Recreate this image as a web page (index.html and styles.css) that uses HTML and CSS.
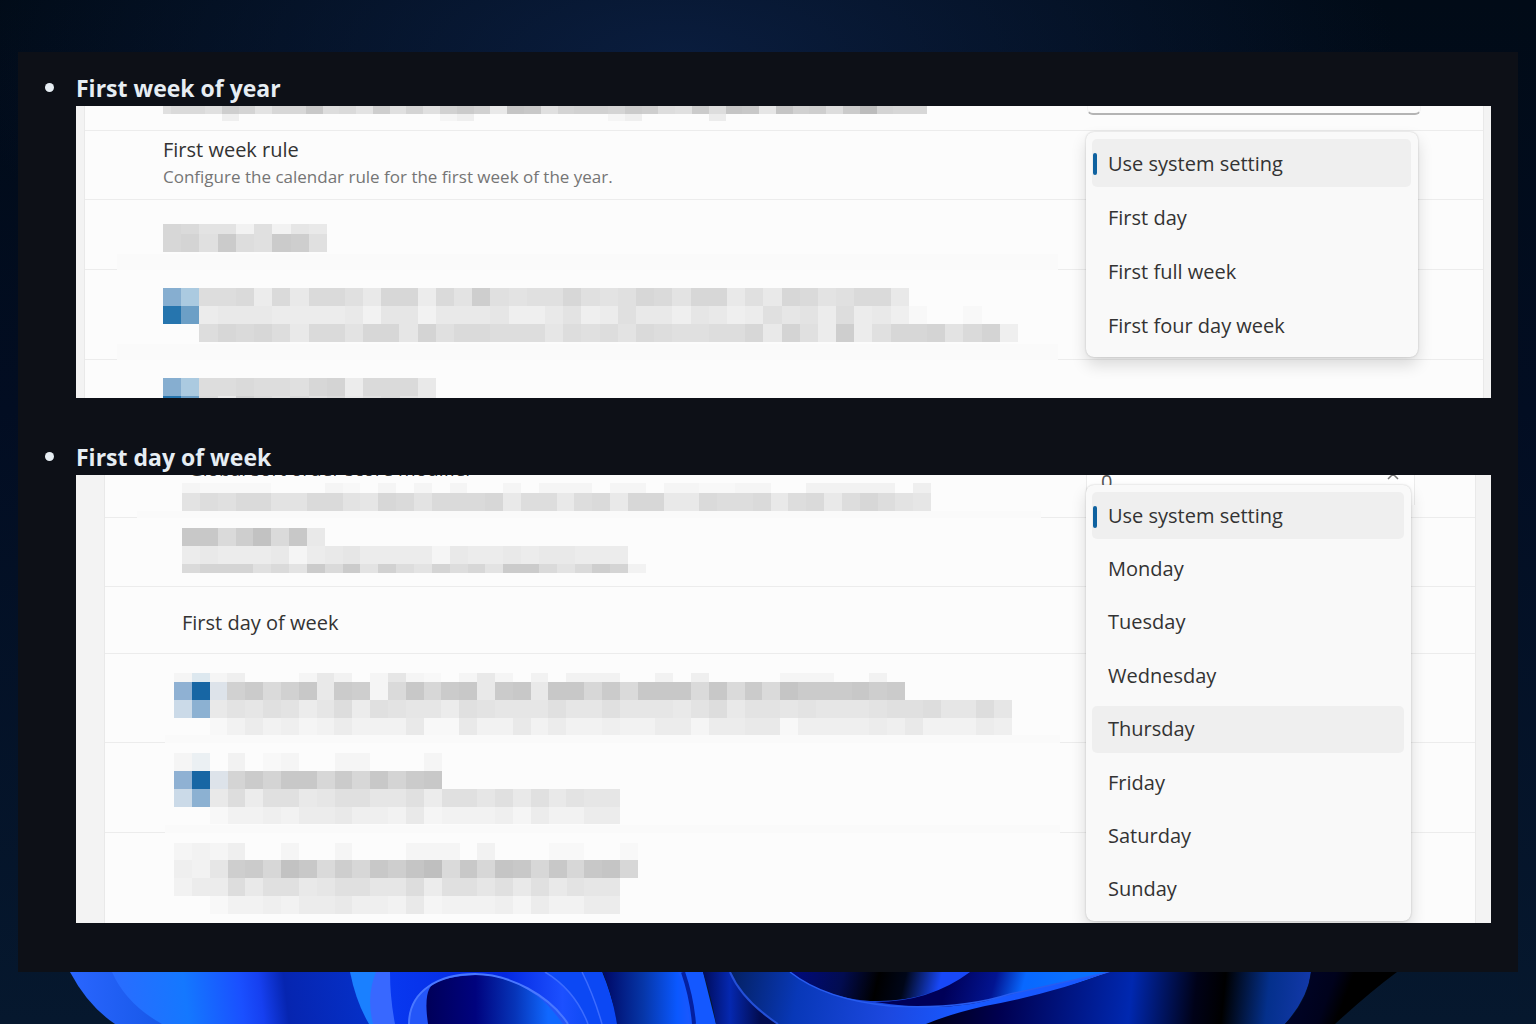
FILE: index.html
```html
<!DOCTYPE html>
<html lang="en">
<head>
<meta charset="utf-8">
<title>Calendar settings</title>
<link rel="stylesheet" href="styles.css">
</head>
<body>
<main class="notes">
  <ul class="notes-list">
    <li class="note">
      <h2 class="note-title">First week of year</h2>
      <section class="shot shot-year" aria-label="First week of year">
        <div class="card">
          <div class="row row-cut">
            <svg class="mosaic" data-cell="16.8" data-lead="0.5" data-rows="8:jlljpnimmrklipjnjoqogsrjnoonqpkjqksrhsopkqvnmm 7:....e............ce........ce....f............"></svg>
            <div class="field-edge"></div>
          </div>
          <div class="row row-rule">
            <h3 class="setting">First week rule</h3>
            <p class="hint">Configure the calendar rule for the first week of the year.</p>
          </div>
          <div class="row row-short smudged">
            <svg class="mosaic" data-cell="18.2" data-rows="10:mliidjdhg 18:mnjqkjqpj"></svg>
          </div>
          <div class="row row-check smudged">
            <svg class="mosaic" data-cell="18.2" data-rows="18:ABkklflglljgmmflipjijjmjijmlimmgjgmlijllg...... 18:CDfgggffffgdhhdgggheegiefjggehgefjhifkfgeb..b.. 18:..kmlmkgllimmhnjllkkkhkjkilkjjkkmgnjfpfjmmnilne"></svg>
          </div>
          <div class="row row-check-cut">
            <svg class="mosaic" data-cell="18.2" data-rows="18:ABkklkkjmnflllg 2:CDlgoljljlgjlig"></svg>
          </div>
        </div>
        <div class="menu menu-year" role="listbox" aria-label="First week rule">
          <button class="option selected" type="button" role="option" aria-selected="true">Use system setting</button>
          <button class="option" type="button" role="option">First day</button>
          <button class="option" type="button" role="option">First full week</button>
          <button class="option" type="button" role="option">First four day week</button>
        </div>
      </section>
    </li>
    <li class="note">
      <h2 class="note-title">First day of week</h2>
      <section class="shot shot-week" aria-label="First day of week">
        <div class="card">
          <div class="row row-score smudged">
            <h3 class="setting setting-cut">Global sort order score modifier</h3>
            <svg class="mosaic" data-cell="17.84" data-rows="10:cbbbb...cb.c.c.c..c.ccc.cc.ccbbcc..ddddd.e 18:ikjlliillihmlilllmgkkgklgmmgglkklgklgkmkih"></svg>
            <div class="spinner">
              <input class="spinner-value" type="text" value="0" aria-label="Global sort order score modifier">
              <svg class="chevron" viewBox="0 0 12 8"><path d="M1 7 6 2l5 5" fill="none" stroke="#777" stroke-width="1.5"/></svg>
            </div>
          </div>
          <div class="row row-format">
            <svg class="mosaic" data-cell="17.84" data-rows="18:rrlptlrg.................. 18:fgfffgcfghffffcgffgfggfff. 9:lnnnjliqlqiokinkmiqqlilpnd"></svg>
          </div>
          <div class="row row-day">
            <h3 class="setting">First day of week</h3>
          </div>
          <div class="row row-first-box smudged">
            <svg class="mosaic" data-cell="17.83" data-rows="9:cJce...cgd.chcb.cgc.d.ddd..d.e....ccc..d....... 18:EFIoqlorgqpclrmqrgqrgrrmqlrrrlrlqlsqqqrpq...... 18:GHgihjifhkfjihhfjihhhjhhjhhhgikgiihihhhijjkhhkh 17:..bdfdecdfdddgbbgddgdfddeddffcffggbeeeefegdddfe"></svg>
          </div>
          <div class="row row-box smudged">
            <svg class="mosaic" data-cell="17.83" data-rows="18:cK.d.bc..cc...c.......... 18:EFInqnrrmqmrnqr.......... 18:GHgkfjjghjjhhjfjjhjgjgihh 17:..bddedffgeedgcdddecfddff"></svg>
          </div>
          <div class="row row-box">
            <svg class="mosaic" data-cell="17.83" data-rows="17:cdce..c..c...ccc.d...bb..b 18:edhpqmtrlpmrpsulrmsrmrmrsm 18:dffkgjjghjjhhkfjjhjgjgihh. 18:..bddedffgeedgcdddecfddff."></svg>
          </div>
        </div>
        <div class="menu menu-week" role="listbox" aria-label="First day of week">
          <button class="option selected" type="button" role="option" aria-selected="true">Use system setting</button>
          <button class="option" type="button" role="option">Monday</button>
          <button class="option" type="button" role="option">Tuesday</button>
          <button class="option" type="button" role="option">Wednesday</button>
          <button class="option hovered" type="button" role="option">Thursday</button>
          <button class="option" type="button" role="option">Friday</button>
          <button class="option" type="button" role="option">Saturday</button>
          <button class="option" type="button" role="option">Sunday</button>
        </div>
      </section>
    </li>
  </ul>
</main>
<svg class="bloom" viewBox="0 0 1536 52" preserveAspectRatio="none" aria-hidden="true">
  <defs>
    <linearGradient id="g1" gradientUnits="userSpaceOnUse" x1="70" y1="0" x2="160" y2="0"><stop offset="0" stop-color="#2a66ff"/><stop offset="1" stop-color="#1758e8"/></linearGradient>
    <linearGradient id="g2" gradientUnits="userSpaceOnUse" x1="112" y1="0" x2="360" y2="-30"><stop offset="0" stop-color="#2a6cff"/><stop offset=".28" stop-color="#1478ff"/><stop offset=".5" stop-color="#1a50ff"/><stop offset=".58" stop-color="#1640f0"/><stop offset=".68" stop-color="#0625b0"/><stop offset="1" stop-color="#0530c8"/></linearGradient>
    <linearGradient id="g3" gradientUnits="userSpaceOnUse" x1="425" y1="0" x2="570" y2="0"><stop offset="0" stop-color="#000058"/><stop offset=".35" stop-color="#00037e"/><stop offset=".62" stop-color="#0634b8"/><stop offset=".85" stop-color="#1068ff"/></linearGradient>
    <linearGradient id="g4" gradientUnits="userSpaceOnUse" x1="390" y1="0" x2="620" y2="0"><stop offset="0" stop-color="#0838f0"/><stop offset=".5" stop-color="#0428e0"/><stop offset=".75" stop-color="#1c50ff"/><stop offset=".9" stop-color="#0a48f0"/><stop offset="1" stop-color="#0430d0"/></linearGradient>
    <linearGradient id="g5" gradientUnits="userSpaceOnUse" x1="605" y1="0" x2="690" y2="0"><stop offset="0" stop-color="#000a68"/><stop offset=".45" stop-color="#0636a8"/><stop offset=".85" stop-color="#0a58ff"/><stop offset="1" stop-color="#1a58ff"/></linearGradient>
    <linearGradient id="g6" gradientUnits="userSpaceOnUse" x1="700" y1="0" x2="760" y2="0"><stop offset="0" stop-color="#000850"/><stop offset=".5" stop-color="#0528b0"/><stop offset="1" stop-color="#020c50"/></linearGradient>
    <linearGradient id="g7" gradientUnits="userSpaceOnUse" x1="730" y1="0" x2="960" y2="40"><stop offset="0" stop-color="#042060"/><stop offset=".3" stop-color="#0838b8"/><stop offset=".7" stop-color="#1c48e0"/><stop offset="1" stop-color="#1858ff"/></linearGradient>
    <linearGradient id="g8" gradientUnits="userSpaceOnUse" x1="790" y1="0" x2="960" y2="40"><stop offset="0" stop-color="#000a80"/><stop offset=".3" stop-color="#020c50"/><stop offset=".5" stop-color="#000"/><stop offset=".65" stop-color="#000618"/><stop offset=".85" stop-color="#1848f8"/></linearGradient>
    <linearGradient id="g9" gradientUnits="userSpaceOnUse" x1="950" y1="0" x2="1060" y2="30"><stop offset="0" stop-color="#000058"/><stop offset=".4" stop-color="#021490"/><stop offset=".65" stop-color="#0868ff"/><stop offset="1" stop-color="#0a70ff"/></linearGradient>
    <linearGradient id="g10" gradientUnits="userSpaceOnUse" x1="920" y1="30" x2="1320" y2="70"><stop offset="0" stop-color="#00000c"/><stop offset=".2" stop-color="#000050"/><stop offset=".52" stop-color="#0028b0"/><stop offset=".68" stop-color="#000218"/><stop offset=".75" stop-color="#000"/><stop offset=".86" stop-color="#04308c"/><stop offset=".96" stop-color="#1238a8"/></linearGradient>
    <linearGradient id="g11" gradientUnits="userSpaceOnUse" x1="1300" y1="0" x2="1380" y2="30"><stop offset="0" stop-color="#000428"/><stop offset=".4" stop-color="#00021c"/><stop offset=".6" stop-color="#000"/></linearGradient>
  </defs>
  <path d="M70 0Q88 34 115 52H420V0Z" fill="url(#g1)"/>
  <path d="M112 0Q126 32 162 52H420V0Z" fill="url(#g2)"/>
  <path d="M350 0Q356 30 369 52H420V0Z" fill="#1a80ff"/>
  <path d="M376 0Q366 24 373 52H420V0Z" fill="#3868ff"/>
  <path d="M390 0Q390 26 395 52H620L602 0Z" fill="url(#g4)"/>
  <path d="M545 0Q575 18 588 52H617Q612 22 602 0Z" fill="#0c48f4"/>
  <path d="M545 0Q575 18 588 52M582 0Q594 24 602 52" fill="none" stroke="#3c6cff" stroke-width="1.5"/>
  <path d="M409 52C409 18 440 2 475 2S550 24 568 52Z" fill="#2456f8"/>
  <path d="M428 52C424 24 428 14 436 10C450 4 470 3 482 3C520 6 545 26 563 52Z" fill="url(#g3)"/>
  <path d="M409 52C409 18 440 2 475 2S550 24 568 52" fill="none" stroke="#4a78ff" stroke-width="2"/>
  <path d="M603 0Q613 26 617 52H700L680 0Z" fill="url(#g5)"/>
  <path d="M678 0Q688 26 690 52H716L703 0Z" fill="#1458ff"/>
  <path d="M683 0Q692 26 694 52" fill="none" stroke="#0420a0" stroke-width="4"/>
  <path d="M703 0Q712 26 716 52H800V0Z" fill="url(#g6)"/>
  <path d="M730 0Q742 28 778 52H960L1110 0Z" fill="url(#g7)"/>
  <path d="M730 0Q742 28 778 52" fill="none" stroke="#2450d8" stroke-width="2"/>
  <path d="M790 0C815 20 850 29 875 29Q930 30 970 0Z" fill="url(#g8)"/>
  <path d="M970 0Q930 30 875 30Q950 42 1000 25L1110 0Z" fill="url(#g9)"/>
  <path d="M790 0C815 20 850 30 890 34Q960 38 1010 22L1110 0" fill="none" stroke="#285cf0" stroke-width="1.5"/>
  <path d="M1110 0Q1050 22 985 34Q950 42 926 52H1285Q1308 26 1311 0Z" fill="url(#g10)"/>
  <path d="M1311 0Q1308 28 1285 52H1335Q1370 20 1397 0Z" fill="url(#g11)"/>
</svg>
<script src="mosaic.js"></script>
</body>
</html>
```
FILE: styles.css
```css
* { box-sizing: border-box; }

body {
  margin: 0;
  min-height: 100vh;
  display: flex;
  flex-direction: column;
  padding: 52px 18px 0;
  background:
    radial-gradient(ellipse 720px 300px at 44% 60px, #0a1d3e, rgba(10, 29, 62, 0)),
    linear-gradient(#010b17, #020d22 40%, #06182e);
  font-family: "Open Sans", "Noto Sans", sans-serif;
  color: #333;
}

h2, h3, p, ul { margin: 0; padding: 0; }

.notes {
  padding: 20px 27px 49px 58px;
  background: #0d1017;
}

.notes-list {
  list-style: none;
  display: flex;
  flex-direction: column;
  gap: 43px;
}

.note { position: relative; }

.note::before {
  content: "";
  position: absolute;
  left: -31px;
  top: 11px;
  width: 9px;
  height: 9px;
  border-radius: 50%;
  background: #e6edf3;
}

.note-title {
  padding-bottom: 2px;
  font-size: 23px;
  line-height: 32px;
  font-weight: 700;
  color: #e6edf3;
}

.shot {
  position: relative;
  overflow: hidden;
  background: #f3f3f3;
}

.shot-year { padding: 0 7px 0 8px; }
.shot-week { padding: 0 15px 0 28px; }

.card {
  background: #fcfcfc;
  border: solid #e9e9e9;
  border-width: 0 1px;
}

.row {
  position: relative;
  display: flow-root;
  border-bottom: 1px solid #ececec;
}

.row:last-child { border-bottom: 0; }

.shot-year .row { padding-left: 78px; }
.shot-week .row { padding-left: 77px; }

.shot-year .row-cut { padding-bottom: 9px; }
.shot-year .row-rule { padding-top: 5px; padding-bottom: 9px; }
.shot-year .row-short { padding-top: 24px; padding-bottom: 17px; }
.shot-year .row-check { padding-top: 18px; padding-bottom: 17px; }
.shot-year .row-check-cut { padding-top: 18px; }

.shot-week .row-score { padding-bottom: 6px; }
.shot-week .row-format { padding-top: 10px; padding-bottom: 13px; }
.shot-week .row-day { padding-top: 22px; padding-bottom: 16px; }
.shot-week .row-first-box { padding: 19px 0 7px 69px; }
.shot-week .row-box { padding: 10px 0 8px 69px; }
.shot-week .row-box:last-child { padding-bottom: 9px; }

.smudged::after {
  content: "";
  position: absolute;
  left: 32px;
  right: 425px;
  bottom: -1px;
  height: 16px;
  background: #fafafa;
}

.row-score.smudged::after { right: 434px; height: 7px; }
.row-first-box.smudged::after,
.row-box.smudged::after { left: 60px; right: 415px; height: 8px; }

.mosaic { display: block; }

.setting {
  font-size: 20px;
  line-height: 28px;
  font-weight: 400;
}

.setting-cut {
  margin: -20px 0 0 7px;
  font-size: 19px;
  font-weight: 500;
}

.hint {
  font-size: 17px;
  line-height: 26px;
  color: #757575;
}

.field-edge {
  position: absolute;
  top: 0;
  right: 62px;
  width: 334px;
  height: 9px;
  border: 1px solid #f4f4f4;
  border-top: 0;
  border-bottom: 2px solid #b4b4b4;
  border-radius: 0 0 6px 6px;
}

.spinner {
  position: absolute;
  top: 0;
  right: 60px;
  width: 329px;
  height: 30px;
  display: flex;
  align-items: flex-start;
  justify-content: space-between;
  padding: 0 15px 0 14px;
  background: #fff;
  border: solid #ececec;
  border-width: 0 1px;
}

.spinner-value {
  width: 60px;
  height: 26px;
  margin-top: -7px;
  padding: 0;
  border: 0;
  background: none;
  font: inherit;
  font-size: 20px;
  color: #555;
}

.chevron {
  width: 12px;
  height: 8px;
  margin-top: -3px;
}

.menu {
  position: absolute;
  display: flex;
  flex-direction: column;
  gap: 6px;
  padding: 7px 7px 8px 6px;
  border-radius: 8px;
  background: #f9f9f9;
  box-shadow: 0 0 2px rgba(0, 0, 0, .22), 0 8px 16px rgba(0, 0, 0, .14);
}

.menu-year { top: 26px; right: 73px; width: 332px; }
.menu-week { top: 10px; bottom: 2px; right: 80px; width: 325px; }

.option {
  position: relative;
  flex: 1 0 auto;
  height: 48px;
  padding: 2px 0 0 16px;
  border: 0;
  border-radius: 5px;
  background: none;
  font: inherit;
  font-size: 20px;
  line-height: 28px;
  text-align: left;
  color: #333;
}

.menu-week .option { flex: 1 1 0; height: auto; padding-top: 0; }

.option.selected,
.option.hovered { background: #efefef; }

.option.selected::before {
  content: "";
  position: absolute;
  left: 1px;
  top: 14px;
  width: 4px;
  height: 22px;
  border-radius: 2px;
  background: #0f62a0;
}

.bloom {
  display: block;
  width: 100vw;
  height: 52px;
  margin-left: -18px;
}
```
FILE: mosaic.js
```js
// Draws the pixelated blocks. Each row is "height:cells"; a lower-case letter
// is a grey (a is lightest), an upper-case one a blue, and a dot is empty.
const blues = {
  A: "#86aed0", B: "#abcae0", C: "#2675ae", D: "#6c9fc6", E: "#8fb1d3",
  F: "#1766a4", G: "#cbdae8", H: "#8cb1d2", I: "#dde3ea", J: "#dde8ef", K: "#ebf0f3"
};
const ns = "http://www.w3.org/2000/svg";

for (const svg of document.querySelectorAll(".mosaic")) {
  const cell = Number(svg.dataset.cell);
  const lead = Number(svg.dataset.lead || 0);
  let y = 0;
  let columns = 0;
  for (const row of svg.dataset.rows.split(" ")) {
    const [height, cells] = row.split(":");
    columns = Math.max(columns, cells.length);
    [...cells].forEach((key, i) => {
      if (key === ".") return;
      const grey = 251 - 3 * (key.charCodeAt(0) - 97);
      const rect = document.createElementNS(ns, "rect");
      rect.setAttribute("x", i);
      rect.setAttribute("y", y);
      rect.setAttribute("width", 1);
      rect.setAttribute("height", height);
      rect.setAttribute("fill", blues[key] || `rgb(${grey},${grey},${grey})`);
      svg.append(rect);
    });
    y += Number(height);
  }
  svg.setAttribute("viewBox", `${lead} 0 ${columns - lead} ${y}`);
  svg.setAttribute("preserveAspectRatio", "none");
  svg.setAttribute("shape-rendering", "crispEdges");
  svg.style.width = `${Math.round((columns - lead) * cell)}px`;
  svg.style.height = `${y}px`;
}
```
